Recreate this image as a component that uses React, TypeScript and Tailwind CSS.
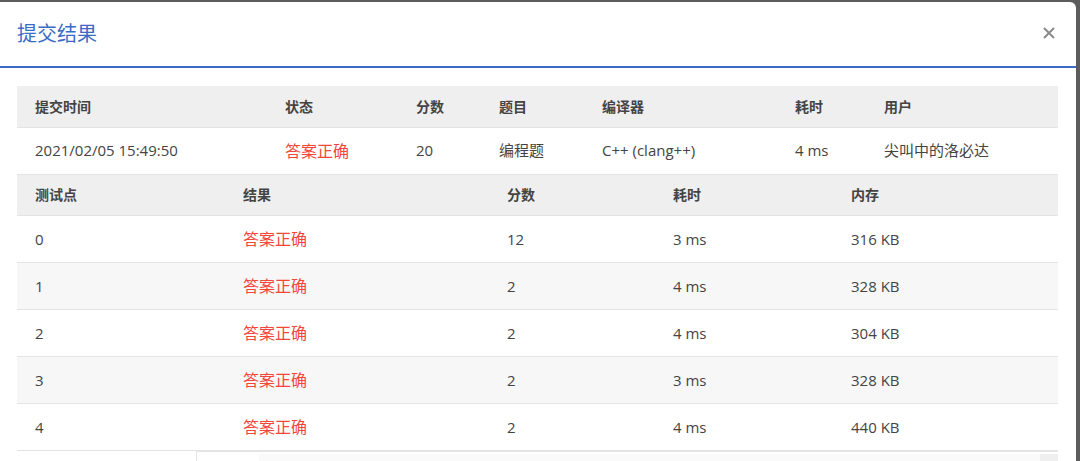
const summary = {
  time: "2021/02/05 15:49:50",
  status: "答案正确",
  score: "20",
  type: "编程题",
  compiler: "C++ (clang++)",
  cost: "4 ms",
  user: "尖叫中的洛必达",
}

const cases = [
  { id: "0", score: "12", time: "3 ms", mem: "316 KB" },
  { id: "1", score: "2", time: "4 ms", mem: "328 KB" },
  { id: "2", score: "2", time: "4 ms", mem: "304 KB" },
  { id: "3", score: "2", time: "3 ms", mem: "328 KB" },
  { id: "4", score: "2", time: "4 ms", mem: "440 KB" },
]

const font = { fontFamily: '"Open Sans", "Noto Sans CJK SC", sans-serif' }

export default function App() {
  return (
    <div className="h-[461px] w-[1080px] overflow-hidden bg-[#5c5c5c] pt-[2px]" style={font}>
      <div className="h-[459px] w-[1076px] overflow-hidden rounded-tr-[6px] bg-white">
        <div className="flex h-[66px] items-center justify-between border-b-2 border-[#3b6bc6] pl-[17px] pr-[21px]">
          <h2 className="text-[20px] leading-none text-[#3b6bc6]">提交结果</h2>
          <svg width="12" height="12" viewBox="0 0 12 12" className="mt-[-2px]">
            <path d="M1 1 L11 11 M11 1 L1 11" stroke="#8a8a8a" strokeWidth="2" />
          </svg>
        </div>

        <div className="px-[17px] pt-[18px] text-[15px] text-[#444]">
          <table className="w-[1041px] table-fixed border-collapse">
            <colgroup>
              <col className="w-[250px]" />
              <col className="w-[131px]" />
              <col className="w-[83px]" />
              <col className="w-[103px]" />
              <col className="w-[193px]" />
              <col className="w-[89px]" />
              <col className="w-[192px]" />
            </colgroup>
            <thead>
              <tr className="h-[41px] border-b border-[#e4e4e4] bg-[#efefef] text-left text-[14px]">
                <th className="pl-[18px] font-bold">提交时间</th>
                <th className="pl-[18px] font-bold">状态</th>
                <th className="pl-[18px] font-bold">分数</th>
                <th className="pl-[18px] font-bold">题目</th>
                <th className="pl-[18px] font-bold">编译器</th>
                <th className="pl-[18px] font-bold">耗时</th>
                <th className="pl-[18px] font-bold">用户</th>
              </tr>
            </thead>
            <tbody>
              <tr className="h-[47px] border-b border-[#e4e4e4]">
                <td className="pl-[18px]">{summary.time}</td>
                <td className="pl-[18px] text-[16px] text-[#f5463a]">{summary.status}</td>
                <td className="pl-[18px]">{summary.score}</td>
                <td className="pl-[18px]">{summary.type}</td>
                <td className="pl-[18px]">{summary.compiler}</td>
                <td className="pl-[18px]">{summary.cost}</td>
                <td className="pl-[18px]">{summary.user}</td>
              </tr>
            </tbody>
          </table>

          <table className="w-[1041px] table-fixed border-collapse">
            <colgroup>
              <col className="w-[208px]" />
              <col className="w-[264px]" />
              <col className="w-[166px]" />
              <col className="w-[178px]" />
              <col className="w-[225px]" />
            </colgroup>
            <thead>
              <tr className="h-[41px] border-b border-[#e4e4e4] bg-[#efefef] text-left text-[14px]">
                <th className="pl-[18px] font-bold">测试点</th>
                <th className="pl-[18px] font-bold">结果</th>
                <th className="pl-[18px] font-bold">分数</th>
                <th className="pl-[18px] font-bold">耗时</th>
                <th className="pl-[18px] font-bold">内存</th>
              </tr>
            </thead>
            <tbody>
              {cases.map((c, i) => (
                <tr
                  key={c.id}
                  className={`h-[47px] border-b border-[#e4e4e4] ${i % 2 === 1 ? "bg-[#f7f7f7]" : "bg-white"}`}
                >
                  <td className="pl-[18px]">{c.id}</td>
                  <td className="pl-[18px] text-[16px] text-[#f5463a]">答案正确</td>
                  <td className="pl-[18px]">{c.score}</td>
                  <td className="pl-[18px]">{c.time}</td>
                  <td className="pl-[18px]">{c.mem}</td>
                </tr>
              ))}
            </tbody>
          </table>

          <div className="flex h-[20px] w-[1041px]">
            <div className="w-[179px]" />
            <div className="flex flex-1 border-l border-t border-[#e4e4e4] pt-[2px]">
              <div className="w-[62px]" />
              <div className="flex-1 bg-[#fafafa]" />
              <div className="w-[18px] bg-[#efefef]" />
            </div>
          </div>
        </div>
      </div>
    </div>
  )
}
